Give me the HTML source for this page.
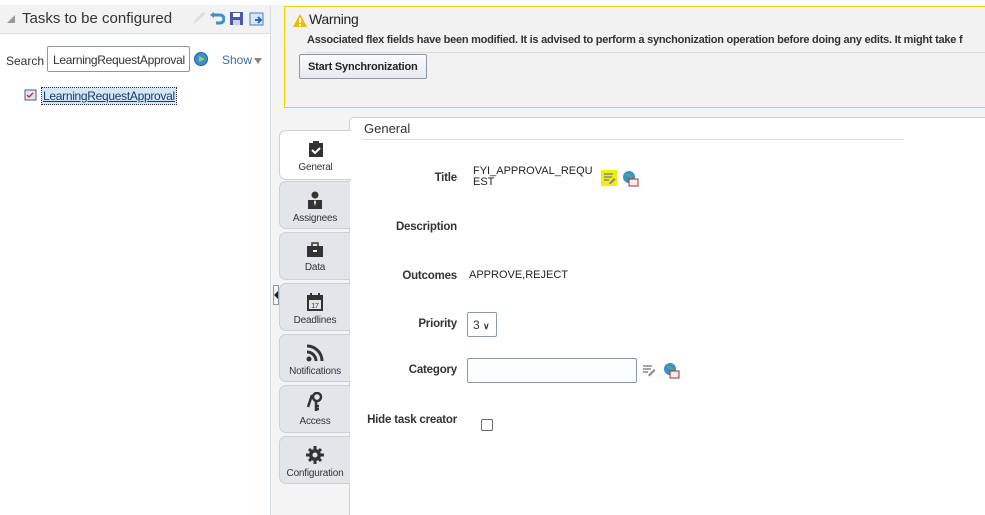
<!DOCTYPE html>
<html><head><style>
*{box-sizing:border-box;margin:0;padding:0}
body{width:985px;height:515px;overflow:hidden;background:#f4f4f4;font-family:"Liberation Sans",Arial,sans-serif;position:relative;color:#333}
.abs{position:absolute}
#left{left:0;top:5px;width:271px;height:510px;background:#fff;border-right:1px solid #d6dde3}
#lh{left:0;top:0;width:270px;height:29px;background:#f2f2f2;border-bottom:1px solid #dde1e5}
.lbl{font-size:11.5px;color:#333;font-weight:bold;right:528px;text-align:right;white-space:nowrap;letter-spacing:-0.2px}
.tab{position:absolute;left:279px;width:71px;height:48px;background:#e2e6ea;border:1px solid #c9d0d6;border-right:none;border-radius:7px 0 0 7px;text-align:center;font-size:10px;color:#333;letter-spacing:-0.2px}
.tab svg{display:block;margin:9px auto 4px}
</style></head><body>
<div class="abs" style="left:0;top:0;width:985px;height:5px;background:#fff"></div>
<div class="abs" id="left">
 <div class="abs" id="lh">
  <div class="abs" style="left:7px;top:10px;width:0;height:0;border-left:8px solid transparent;border-bottom:8px solid #999"></div>
  <div class="abs" style="left:22px;top:5px;font-size:15px;color:#333">Tasks to be configured</div>
  <svg class="abs" style="left:190px;top:6px" width="16" height="16"><path d="M3 13l2-4 8-8 2 2-8 8z" fill="#ddd"/></svg>
  <svg class="abs" style="left:209px;top:6px" width="16" height="16"><path d="M3 4h8a4 4 0 0 1 0 8H7" stroke="#3a8fd0" stroke-width="3" fill="none"/><path d="M1 4l4-3v6z" fill="#3a8fd0"/></svg>
  <svg class="abs" style="left:229px;top:6px" width="15" height="15"><rect x="1" y="1" width="13" height="13" fill="#4a5aa8"/><rect x="4" y="2" width="7" height="4" fill="#fff"/><rect x="4" y="9" width="7" height="5" fill="#c8d0e8"/></svg>
  <svg class="abs" style="left:249px;top:6px" width="16" height="16"><rect x="1" y="2" width="13" height="12" fill="#d8e6f5" stroke="#4a7ec0"/><path d="M6 9h5M9 6l3 3-3 3" stroke="#2a6bb5" stroke-width="2" fill="none"/></svg>
 </div>
 <div class="abs" style="left:6px;top:49px;font-size:12px">Search</div>
 <div class="abs" style="left:47px;top:41px;width:143px;height:26px;border:1px solid #8a9aaa;border-radius:2px;font-size:12px;padding:6px 0 0 5px;background:#fff;letter-spacing:-0.3px;overflow:hidden;white-space:nowrap">LearningRequestApproval</div>
 <div class="abs" style="left:194px;top:47px;width:14px;height:14px;border-radius:50%;background:#3a8fd0;border:1px solid #27609a"><div class="abs" style="left:4px;top:3px;border-left:6px solid #8fd14f;border-top:3.5px solid transparent;border-bottom:3.5px solid transparent"></div></div>
 <div class="abs" style="left:222px;top:48px;font-size:12px;color:#3a6ea5">Show</div>
 <div class="abs" style="left:254px;top:53px;border-top:6px solid #888;border-left:4px solid transparent;border-right:4px solid transparent"></div>
 <svg class="abs" style="left:24px;top:83px" width="13" height="13"><rect x="1" y="2" width="11" height="10" fill="#e0e6f0" stroke="#4a5a8a"/><path d="M3 7l2 2 4-4" stroke="#c03030" stroke-width="1.5" fill="none"/></svg>
 <div class="abs" style="left:41px;top:82px;font-size:12px;background:#d5e6f6;border:1px dotted #333;padding:1px 1px;color:#1a3a6a;text-decoration:underline;letter-spacing:-0.3px">LearningRequestApproval</div>
</div>
<div class="abs" style="left:284px;top:6px;width:710px;height:102px;background:#f2f2f2;border:1px solid #f2d200">
 <svg class="abs" style="left:7px;top:6px" width="16" height="15"><path d="M8 1L15 14H1z" fill="#f5b800"/><rect x="7" y="5" width="2" height="5" fill="#fff"/><rect x="7" y="11" width="2" height="2" fill="#fff"/></svg>
 <div class="abs" style="left:24px;top:4px;font-size:14px;color:#222;letter-spacing:-0.3px">Warning</div>
 <div class="abs" style="left:22px;top:27px;font-size:11px;font-weight:bold;color:#333;white-space:nowrap;letter-spacing:-0.25px">Associated flex fields have been modified. It is advised to perform a synchonization operation before doing any edits. It might take f</div>
 <div class="abs" style="left:20px;top:45px;width:700px;border-top:1px solid #d6dce2"></div>
 <div class="abs" style="left:14px;top:47px;width:128px;height:25px;border:1px solid #8a9aaa;border-radius:2px;background:linear-gradient(#fafbfc,#e6eaee);font-size:11px;font-weight:bold;padding:6px 0 0 8px;color:#222;letter-spacing:-0.2px">Start Synchronization</div>
</div>
<div class="abs" style="left:349px;top:117px;width:636px;height:398px;background:#fff;border-top:1px solid #c9d0d6;border-left:1px solid #c9d0d6;border-radius:5px 0 0 0"></div>
<div class="abs" style="left:364px;top:121px;font-size:13px;color:#333">General</div>
<div class="abs" style="left:362px;top:139px;width:542px;border-top:1px solid #d6dce2"></div>

<div class="tab" style="top:130px;height:50px;background:#fff;width:72px">
<svg width="16" height="18"><rect x="1" y="3" width="14" height="14" fill="#333"/><rect x="5" y="1" width="6" height="4" fill="#333"/><path d="M4 10l3 3 5-5" stroke="#fff" stroke-width="2" fill="none"/></svg>General</div>
<div class="tab" style="top:181px">
<svg width="16" height="18"><circle cx="8" cy="4" r="3.5" fill="#333"/><path d="M1 9h14v9H1z" fill="#333"/><path d="M8 9l-1 2 1 4 1-4z" fill="#fff"/></svg>Assignees</div>
<div class="tab" style="top:232px">
<svg width="18" height="16"><rect x="1" y="4" width="16" height="11" fill="#333"/><rect x="6" y="1" width="6" height="4" fill="none" stroke="#333" stroke-width="1.5"/><rect x="7" y="8" width="4" height="2" fill="#fff"/></svg>Data</div>
<div class="tab" style="top:283px">
<svg width="16" height="18"><rect x="1" y="3" width="14" height="14" fill="none" stroke="#333" stroke-width="2"/><rect x="1" y="3" width="14" height="4" fill="#333"/><rect x="3" y="0" width="2" height="4" fill="#333"/><rect x="11" y="0" width="2" height="4" fill="#333"/><text x="8" y="15" font-size="7" text-anchor="middle" fill="#333" font-family="Liberation Sans">17</text></svg>Deadlines</div>
<div class="tab" style="top:334px">
<svg width="18" height="18"><circle cx="3" cy="15" r="2.5" fill="#333"/><path d="M1 8a9 9 0 0 1 9 9M1 2a15 15 0 0 1 15 15" stroke="#333" stroke-width="3" fill="none"/></svg>Notifications</div>
<div class="tab" style="top:385px">
<svg width="18" height="20" style="margin-top:6px"><circle cx="11" cy="5" r="4" fill="none" stroke="#333" stroke-width="2.5"/><path d="M10 9v10M10 14h3M10 17h3" stroke="#333" stroke-width="2.5"/><path d="M6 3L2 15" stroke="#333" stroke-width="2.5"/></svg>Access</div>
<div class="tab" style="top:436px">
<svg width="18" height="18"><circle cx="9" cy="9" r="6" fill="#333"/><g stroke="#333" stroke-width="3"><path d="M9 0v18M0 9h18M3 3l12 12M15 3L3 15"/></g><circle cx="9" cy="9" r="2.5" fill="#e2e6ea"/></svg>Configuration</div>
<div class="abs" style="left:273px;top:285px;width:6px;height:20px;border:1px solid #8a9aaa;background:#f4f4f4"><div class="abs" style="left:0;top:5px;border-right:4px solid #222;border-top:4px solid transparent;border-bottom:4px solid transparent"></div></div>

<div class="abs lbl" style="top:172px">Title</div>
<div class="abs" style="left:473px;top:166px;font-size:11px;line-height:11px;color:#222">FYI_APPROVAL_REQU<br>EST</div>
<svg class="abs" style="left:601px;top:170px" width="16" height="16"><rect width="16" height="16" fill="#f0f000"/><path d="M3 4h9M3 7h8M3 10h5" stroke="#888" stroke-width="1.5"/><path d="M8 13l5-5 1.5 1.5-5 5z" fill="#888"/></svg>
<svg class="abs" style="left:622px;top:170px" width="17" height="17"><circle cx="7" cy="7" r="6" fill="#3a8fd0"/><path d="M3 5q3-2 5 0t3 4" fill="#5cb040"/><rect x="7" y="9" width="9" height="7" fill="#eee" stroke="#a03030"/></svg>
<div class="abs lbl" style="top:221px">Description</div>
<div class="abs lbl" style="top:270px">Outcomes</div>
<div class="abs" style="left:469px;top:269px;font-size:11px;color:#222">APPROVE,REJECT</div>
<div class="abs lbl" style="top:318px">Priority</div>
<div class="abs" style="left:467px;top:312px;width:30px;height:25px;border:1px solid #8a9aaa;border-radius:2px;font-size:12px;padding:5px 0 0 5px;background:#fff">3 <span style="font-size:9px;font-weight:bold">&#x2228;</span></div>
<div class="abs lbl" style="top:364px">Category</div>
<div class="abs" style="left:467px;top:358px;width:170px;height:25px;border:1px solid #8a9aaa;border-radius:2px;background:#fcfdfe"></div>
<svg class="abs" style="left:642px;top:363px" width="15" height="15"><path d="M1 3h9M1 6h8M1 9h5" stroke="#888" stroke-width="1.5"/><path d="M6 12l6-6 1.5 1.5-6 6z" fill="#888"/></svg>
<svg class="abs" style="left:663px;top:362px" width="17" height="17"><circle cx="7" cy="7" r="6" fill="#3a8fd0"/><path d="M3 5q3-2 5 0t3 4" fill="#5cb040"/><rect x="7" y="9" width="9" height="7" fill="#eee" stroke="#a03030"/></svg>
<div class="abs lbl" style="top:414px">Hide task creator</div>
<div class="abs" style="left:481px;top:419px;width:12px;height:12px;border:1px solid #666;border-radius:2px;background:#fff"></div>
</body></html>
